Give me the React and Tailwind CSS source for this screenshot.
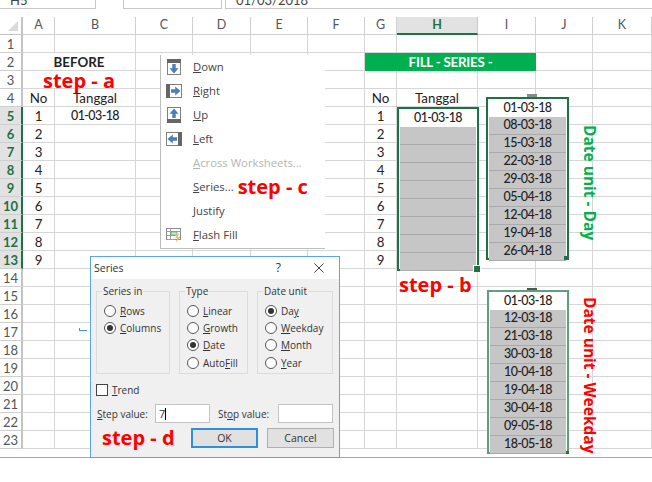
import React from "react";

const COLS = ["A", "B", "C", "D", "E", "F", "G", "H", "I", "J", "K"];
const STEP = "font-['Open_Sans',sans-serif] font-bold text-[#ff0000] text-[20px] leading-none whitespace-nowrap";
const CELL = "border-r border-b border-[#d6d6d6] flex items-center justify-center pt-[2px] text-[13.300px] text-[#222] leading-none overflow-visible";
const DATE = "text-[12.500px] tracking-[-0.6px] text-[#222] font-medium";
const dayDates = ["01-03-18", "08-03-18", "15-03-18", "22-03-18", "29-03-18", "05-04-18", "12-04-18", "19-04-18", "26-04-18"];
const weekDates = ["01-03-18", "12-03-18", "21-03-18", "30-03-18", "10-04-18", "19-04-18", "30-04-18", "09-05-18", "18-05-18"];

function cellText(r, c) {
  if (r === 4 && (c === "A" || c === "G")) return "No";
  if (r === 4 && (c === "B" || c === "H")) return "Tanggal";
  if (r === 5 && c === "B") return <span className={DATE}>01-03-18</span>;
  if (r >= 5 && r <= 13 && (c === "A" || c === "G")) return r - 4;
  return null;
}

function RowCells({ r }) {
  const selected = r >= 5 && r <= 13;
  const header = (
    <div className={`flex items-center justify-center pt-[2px] text-[13px] leading-none border-b border-[#cfcfcf] ${selected ? "bg-[#e2e2e2] text-[#1e7145] font-bold border-r-2 border-r-[#1e7145]" : "text-[#555] border-r-2 border-r-[#c4c4c4]"}`}>
      {r}
    </div>
  );
  if (r === 2) {
    return (
      <>
        {header}
        <div className={`${CELL} col-span-2 font-bold text-[11px]`}>BEFORE</div>
        {["C", "D", "E", "F"].map((c) => <div key={c} className={CELL} />)}
        <div className={`${CELL} col-span-3 bg-[#00b050] text-white font-bold text-[11px] tracking-[-0.2px] border-none`}>FILL - SERIES -</div>
        <div className={CELL} />
        <div className={CELL} />
      </>
    );
  }
  if (r === 3) {
    return (
      <>
        {header}
        <div className={`${CELL} col-span-2`}><span className={STEP}>step - a</span></div>
        {COLS.slice(2).map((c) => <div key={c} className={CELL} />)}
      </>
    );
  }
  return (
    <>
      {header}
      {COLS.map((c) => <div key={c} className={CELL}>{cellText(r, c)}</div>)}
    </>
  );
}

function FillIcon({ rot }) {
  return (
    <svg width="16" height="16" viewBox="0 0 16 16" className="shrink-0" style={{ transform: `rotate(${rot}deg)` }}>
      <rect x="1.500" y="0.500" width="13" height="15" fill="#fff" stroke="#808080" />
      <rect x="1" y="0" width="14" height="4" fill="#666" />
      <path d="M6.300 5h3.400v4.200h2.800L8 14.500 3.500 9.200h2.800z" fill="#4a7ebb" />
    </svg>
  );
}

function FlashIcon() {
  return (
    <svg width="16" height="16" viewBox="0 0 16 16" className="shrink-0">
      <rect x="0.500" y="1.500" width="14" height="11" fill="#fff" stroke="#8a8a8a" />
      <path d="M0.500 4.500h14M0.500 8.500h9M0.500 12.500h9M4.500 1.500v11" stroke="#a0a0a0" fill="none" />
      <rect x="5" y="5" width="6" height="3" fill="#d5e8d5" stroke="#5aa05a" strokeWidth="0.700" />
      <path d="M13 6 9 11h2.500L9.500 16l5-6H12z" fill="#f2b45c" />
    </svg>
  );
}

function MenuRow({ icon, disabled, children, extra }) {
  return (
    <div className="h-6 flex items-center">
      <div className="w-[32px] pl-[5px] flex items-center">{icon}</div>
      <span className={`text-[11.300px] whitespace-nowrap ${disabled ? "text-[#b4b4b4]" : "text-[#444]"}`}>{children}</span>
      {extra}
    </div>
  );
}

function Radio({ checked, children }) {
  return (
    <div className="flex items-center h-[17.300px] gap-[4px]">
      <span className="w-[12px] h-[12px] rounded-full border border-[#555] bg-white flex items-center justify-center shrink-0">
        {checked && <span className="w-[6px] h-[6px] rounded-full bg-[#333]" />}
      </span>
      <span className="text-[#333] whitespace-nowrap">{children}</span>
    </div>
  );
}

function Group({ title, width, children }) {
  return (
    <div className={`relative border border-[#dcdcdc] h-[83px] pt-[10px] pl-[7px] ${width}`}>
      <span className="absolute -top-[6px] left-[5px] bg-[#f0f0f0] px-[1px] text-[#333]">{title}</span>
      {children}
    </div>
  );
}

function Stack({ dates, className, handle }) {
  return (
    <div className={`absolute flex flex-col px-[1px] bg-white border-2 ${className}`}>
      {dates.map((d, i) => (
        <div key={d} className={`h-[18px] flex items-center justify-center leading-none shrink-0 ${i ? "bg-[#c6c6c6] border-b border-[#aaa]" : ""}`}>
          <span className={DATE}>{d}</span>
        </div>
      ))}
      {handle}
    </div>
  );
}

export default function App() {
  return (
    <div className="relative w-[652px] h-[482px] bg-white overflow-hidden font-['Lato',sans-serif]">
      {/* formula bar */}
      <div className="h-[17px] flex items-start">
        <div className="w-[96px] h-[9px] border-b border-r border-[#c8c8c8] overflow-hidden text-[13px] leading-none text-[#444] pl-[10px]"><div className="-mt-[6px]">H5</div></div>
        <div className="ml-[27px] w-[99px] h-[9px] border-b border-x border-[#c8c8c8]" />
        <div className="ml-[3px] flex-1 h-[9px] border-b border-l border-[#c8c8c8] overflow-hidden text-[13px] leading-none text-[#444] pl-[10px]"><div className="-mt-[6px]">01/03/2018</div></div>
      </div>

      {/* sheet */}
      <div className="grid grid-cols-[23px_32px_81px_57px_58px_57px_57px_32px_81px_58px_57px_59px] grid-rows-[18px_repeat(23,18px)_9px]">
        <div className="border-r-2 border-b border-[#c4c4c4] flex items-end justify-end p-[3px]">
          <div className="w-0 h-0 border-l-[10px] border-l-transparent border-b-[10px] border-b-[#dadada]" />
        </div>
        {COLS.map((c) => (
          <div key={c} className={`flex items-center justify-center text-[12.500px] leading-none border-r ${c === "H" ? "bg-[#e2e2e2] text-[#1e7145] font-bold border-b-2 border-b-[#1e7145] border-r-[#c8c8c8]" : "text-[#555] border-b border-[#cfcfcf]"}`}>{c}</div>
        ))}
        {Array.from({ length: 23 }, (_, i) => i + 1).map((r) => <RowCells key={r} r={r} />)}
        <div className="col-span-12 border-b border-[#a8a8a8] overflow-hidden" />
      </div>

      {/* selection H */}
      <Stack
        dates={dayDates.map((d, i) => (i ? `blank${i}` : d))}
        className="left-[397px] top-[107px] w-[82px] h-[164px] border-[#1e7145] [&>div:not(:first-child)>span]:text-transparent"
        handle={<span className="absolute -right-[4px] -bottom-[4px] w-[6px] h-[6px] bg-[#1e7145] border border-white box-content" />}
      />

      {/* pasted result columns */}
      <Stack
        dates={dayDates}
        className="left-[486px] top-[97px] w-[83px] h-[163px] border-[#1e7145]"
        handle={<span className="absolute -right-[2px] -bottom-[2px] w-[5px] h-[4px] bg-[#1e7145]" />}
      />
      <Stack
        dates={weekDates}
        className="left-[487px] top-[290px] w-[82px] h-[164px] border-[#5f9f7f]"
        handle={<span className="absolute -right-[2px] -bottom-[2px] w-[3px] h-[3px] bg-[#1e7145]" />}
      />
      <span className="absolute left-[527px] top-[94px] w-[10px] h-[3px] bg-[#8a8a8a]" />
      <span className="absolute left-[527px] top-[288px] w-[10px] h-[2px] bg-[#555]" />

      <span className="absolute left-[581px] top-[125px] [writing-mode:vertical-rl] font-['Open_Sans',sans-serif] font-bold text-[15.500px] leading-none text-[#00b050] whitespace-nowrap">Date unit - Day</span>
      <span className="absolute left-[581px] top-[297px] [writing-mode:vertical-rl] font-['Open_Sans',sans-serif] font-bold text-[15.500px] leading-none text-[#ff0000] whitespace-nowrap">Date unit - Weekday</span>

      <span className={`absolute left-[399px] top-[275px] ${STEP}`}>step - b</span>
      <span className="absolute left-[79px] top-[328px] w-[8px] h-[3px] border-l border-b border-[#4a90d9]" />

      {/* fill menu */}
      <div className="absolute left-[160px] top-[55px] w-[165px] h-[194px] bg-white border-l border-b border-[#bdbdbd] font-['Open_Sans',sans-serif]">
        <MenuRow icon={<FillIcon rot={0} />}><u>D</u>own</MenuRow>
        <MenuRow icon={<FillIcon rot={-90} />}><u>R</u>ight</MenuRow>
        <MenuRow icon={<FillIcon rot={180} />}><u>U</u>p</MenuRow>
        <MenuRow icon={<FillIcon rot={90} />}><u>L</u>eft</MenuRow>
        <MenuRow disabled><u>A</u>cross Worksheets...</MenuRow>
        <MenuRow extra={<span className={`${STEP} ml-[4px]`}>step - c</span>}><u>S</u>eries...</MenuRow>
        <MenuRow><u>J</u>ustify</MenuRow>
        <MenuRow icon={<FlashIcon />}><u>F</u>lash Fill</MenuRow>
      </div>

      {/* series dialog */}
      <div className="absolute left-[90px] top-[256px] w-[250px] h-[202px] border border-[#5aa5e6] bg-[#f0f0f0] font-['Open_Sans',sans-serif] text-[10px] leading-none">
        <div className="h-[22px] bg-white flex items-center justify-between pl-[3px] pr-[15px]">
          <span className="text-[#333] text-[10.500px]">Series</span>
          <div className="flex items-center gap-[33px]">
            <span className="text-[#333] text-[12px]">?</span>
            <svg width="10" height="10" viewBox="0 0 10 10"><path d="M.5.5l9 9M9.500.5l-9 9" stroke="#444" fill="none" /></svg>
          </div>
        </div>
        <div className="flex px-[5px] pt-[12px]">
          <Group title="Series in" width="w-[74px]">
            <Radio><u>R</u>ows</Radio>
            <Radio checked><u>C</u>olumns</Radio>
          </Group>
          <Group title="Type" width="w-[69px] ml-[9px]">
            <Radio><u>L</u>inear</Radio>
            <Radio><u>G</u>rowth</Radio>
            <Radio checked><u>D</u>ate</Radio>
            <Radio>Auto<u>F</u>ill</Radio>
          </Group>
          <Group title="Date unit" width="w-[76px] ml-[9px]">
            <Radio checked>Da<u>y</u></Radio>
            <Radio><u>W</u>eekday</Radio>
            <Radio><u>M</u>onth</Radio>
            <Radio><u>Y</u>ear</Radio>
          </Group>
        </div>
        <div className="flex items-center gap-[4px] pl-[5px] mt-[9px] h-[13px]">
          <span className="w-[12px] h-[12px] border border-[#444] bg-white" />
          <span className="text-[#333]"><u>T</u>rend</span>
        </div>
        <div className="flex items-center pl-[6px] mt-[8px] h-[19px] text-[#333]">
          <span className="w-[58px]"><u>S</u>tep value:</span>
          <div className="w-[55px] h-[19px] border border-[#c4c4c4] bg-white flex items-center pl-[3px] text-[11px]">7<span className="w-px h-[12px] bg-black" /></div>
          <span className="ml-[8px] w-[60px]">St<u>o</u>p value:</span>
          <div className="w-[55px] h-[19px] border border-[#c4c4c4] bg-white" />
        </div>
        <div className="flex items-center pl-[11px] mt-[5px]">
          <div className="w-[89px]"><span className={STEP}>step - d</span></div>
          <button className="w-[67px] h-[20px] border-2 border-[#2f8fdb] bg-[#e1e1e1] text-[#333] text-[10.500px]">OK</button>
          <button className="ml-[9px] w-[67px] h-[20px] border border-[#b0b0b0] bg-[#e1e1e1] text-[#333] text-[10.500px]">Cancel</button>
        </div>
      </div>
    </div>
  );
}
